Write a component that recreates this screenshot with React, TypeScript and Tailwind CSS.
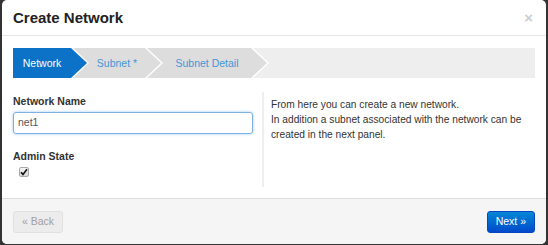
import React from "react";

function Step({
  label,
  width,
  active,
  first,
  z,
}: {
  label: string;
  width: number;
  active?: boolean;
  first?: boolean;
  z: string;
}) {
  return (
    <div
      className={`relative h-[30px] shrink-0 bg-white mr-[-16px] ${z} [clip-path:polygon(0_0,calc(100%-16px)_0,100%_50%,calc(100%-16px)_100%,0_100%)]`}
      style={{ width }}
    >
      <div
        className={`absolute inset-y-0 left-0 right-[2px] flex items-center justify-center pr-[16px] ${
          first ? "" : "pl-[16px]"
        } ${active ? "bg-[#0b72c7] text-white" : "bg-[#dddddd] text-[#4596d6]"} [clip-path:polygon(0_0,calc(100%-16px)_0,100%_50%,calc(100%-16px)_100%,0_100%)]`}
      >
        <span className="text-[10.5px] leading-none">{label}</span>
      </div>
    </div>
  );
}

export default function App() {
  return (
    <div
      className="w-[548px] h-[245px] bg-[#333333] px-[2px] overflow-hidden"
      style={{ fontFamily: '"Liberation Sans", Arial, sans-serif' }}
    >
      <div className="h-[244px] bg-white rounded-[5px] flex flex-col overflow-hidden">
        {/* header */}
        <div className="h-[36px] border-b border-[#e5e5e5] flex items-center justify-between pl-[11px] pr-[13px] shrink-0">
          <h3 className="text-[15px] font-bold text-[#222] leading-none">Create Network</h3>
          <span className="text-[15px] font-bold text-[#000] opacity-20 leading-none">×</span>
        </div>
        {/* body */}
        <div className="flex-1 px-[11px] pt-[12px]">
          <div className="flex h-[30px] bg-[#eeeeee] w-[522px]">
            <Step label="Network" width={76} active first z="z-30" />
            <Step label="Subnet *" width={90} z="z-20" />
            <Step label="Subnet Detail" width={122} z="z-10" />
          </div>
          <div className="flex mt-[14px]">
            <div className="w-[249px] shrink-0 pt-[3px]">
              <label className="block text-[10.5px] font-bold text-[#333] leading-[13px]">
                Network Name
              </label>
              <div className="mt-[4px] w-[240px] h-[22px] border border-[#7fb0e0] rounded-[3px] shadow-[0_0_3px_rgba(82,168,236,0.6)] flex items-center px-[4px] text-[10.5px] text-[#555]">
                net1
              </div>
              <label className="block mt-[16px] text-[10.5px] font-bold text-[#333] leading-[13px]">
                Admin State
              </label>
              <div className="mt-[4px] ml-[6px] w-[10px] h-[10px] border border-[#a8a8a8] rounded-[2px] bg-gradient-to-b from-[#f4f4f4] to-[#d8d8d8] flex items-center justify-center">
                <svg width="8" height="8" viewBox="0 0 8 8">
                  <path d="M1 4.2 L3 6.4 L7 1.2" stroke="#111" strokeWidth="1.6" fill="none" />
                </svg>
              </div>
            </div>
            <div className="w-[2px] h-[95px] shrink-0 bg-[#eeeeee]" />
            <div className="pl-[7px] pt-[5px] text-[10.2px] leading-[15px] text-[#333]">
              <p>From here you can create a new network.</p>
              <p>In addition a subnet associated with the network can be</p>
              <p>created in the next panel.</p>
            </div>
          </div>
        </div>
        {/* footer */}
        <div className="h-[46px] shrink-0 bg-[#f5f5f5] border-t border-[#dddddd] flex items-center justify-between px-[11px]">
          <button className="h-[22px] px-[8px] border border-[#e0e0e0] rounded-[3px] bg-[#ececec] text-[10.5px] text-[#a0a0a0] leading-none">
            « Back
          </button>
          <button className="h-[22px] px-[8px] border border-[#0445c0] rounded-[3px] bg-gradient-to-b from-[#0a86d4] to-[#0449cc] text-[10.5px] text-white leading-none">
            Next »
          </button>
        </div>
      </div>
    </div>
  );
}
